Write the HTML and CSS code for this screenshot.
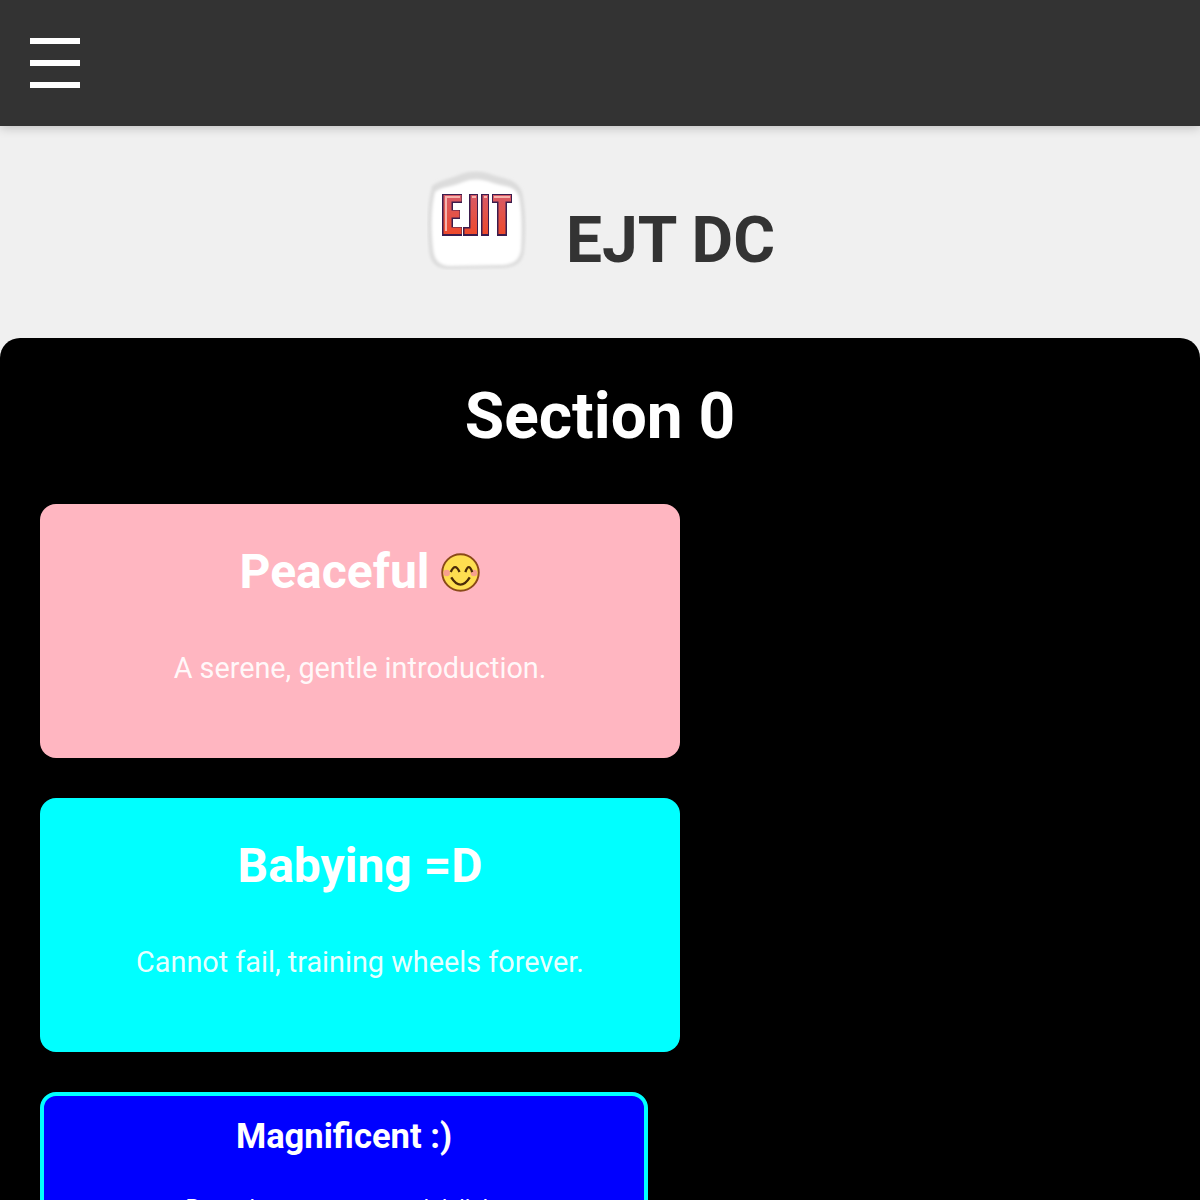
FILE: index.html
```html
<!DOCTYPE html>
<html lang="en">
<head>
<meta charset="utf-8">
<title>EJT DC</title>
<link rel="stylesheet" href="styles.css">
</head>
<body>
<header class="topbar">
  <button class="burger" aria-label="Menu"><span></span><span></span><span></span></button>
</header>
<div class="brand">
  <svg class="logo" viewBox="0 0 100 100" aria-label="EJIT">
    <defs>
      <filter id="soft" x="-10%" y="-10%" width="120%" height="120%"><feGaussianBlur stdDeviation="1.6"/></filter>
      <filter id="crisp" x="-5%" y="-5%" width="110%" height="110%"><feGaussianBlur stdDeviation="0.4"/></filter>
      <linearGradient id="red" x1="0" y1="0" x2="0" y2="1">
        <stop offset="0" stop-color="#d85a66"/>
        <stop offset="1" stop-color="#ee4a2c"/>
      </linearGradient>
    </defs>
    <path d="M5 16 C14 9 24 9 34 4 C46 0 56 1 66 5 C78 9 90 9 95 22 C99 40 99 62 97 82 C95 95 86 98 72 98 L22 99 C10 99 3 93 2 80 C0 58 0 36 5 16 Z" fill="#dcdcdc" filter="url(#soft)"/>
    <path d="M8 22 C16 16 26 17 36 12 C46 8 56 9 66 13 C78 17 88 15 92 27 C95 42 95 62 94 80 C92 92 84 95 72 95 L24 96 C12 96 7 90 6 78 C4 58 4 38 8 22 Z" fill="#fff" filter="url(#soft)"/>
    <g filter="url(#crisp)">
      <g fill="#3a1f4e">
        <path d="M15 24 H35 V33 H26 V40 H33 V49 H26 V57 H35 V66 H15 Z"/>
        <path d="M42 24 H51 V66 H36 V57 H42 Z"/>
        <path d="M54 24 H62 V66 H54 Z"/>
        <path d="M65 24 H85 V33 H80 V66 H70 V33 H65 Z"/>
      </g>
      <g fill="url(#red)">
        <path d="M16.5 25 H34.5 V31.5 H24.5 V40.5 H32.5 V47.5 H24.5 V57.5 H34.5 V64 H16.5 Z"/>
        <path d="M43.5 25 H50 V64 H37.5 V58.5 H43.5 Z"/>
        <path d="M55.5 25 H61 V64 H55.5 Z"/>
        <path d="M66 25 H84 V31.5 H78.5 V64 H71.5 V31.5 H66 Z"/>
      </g>
      <g fill="#f6b3ac">
        <path d="M18 26 H33 V28 H20 V61 H18 Z"/>
        <path d="M45 26 H49 V28 H45 Z"/>
        <path d="M57 26 H60 V28 H57 Z"/>
        <path d="M67 26 H83 V28 H67 Z"/>
      </g>
    </g>
  </svg>
  <h1 class="brand-name">EJT DC</h1>
</div>
<main class="panel">
  <h2 class="section-title">Section 0</h2>
  <article class="card card-pink">
    <h3 class="card-title">Peaceful
      <svg class="smiley" viewBox="0 0 40 40" aria-label="smile">
        <circle cx="20" cy="20" r="18.7" fill="#fede50" stroke="#8a4a18" stroke-width="2"/>
        <circle cx="5.8" cy="20.5" r="3.4" fill="#f7a08e"/>
        <circle cx="33.8" cy="20.5" r="3.4" fill="#f7a08e"/>
        <path d="M10 19.5 Q14.5 9.5 19 19.5 M25 19.5 Q28.5 9.5 32 19.5 M10.5 25 Q20 40 29.5 25" fill="none" stroke="#4a2a08" stroke-width="2.4"/>
      </svg>
    </h3>
    <p class="card-text">A serene, gentle introduction.</p>
  </article>
  <article class="card card-cyan">
    <h3 class="card-title">Babying =D</h3>
    <p class="card-text">Cannot fail, training wheels forever.</p>
  </article>
  <article class="card-small">
    <h3 class="small-title">Magnificent :)</h3>
    <p class="small-text">Pure pleasure, unmarred delight</p>
  </article>
</main>
</body>
</html>
```
FILE: styles.css
```css
* { box-sizing: border-box; }
html, body { margin: 0; padding: 0; }
body { background: #f0f0f0; font-family: Roboto, sans-serif; color: #fff; height: 1200px; overflow: hidden; }
.topbar { position: relative; height: 126px; background: #333; padding: 38px 30px 0; box-shadow: 0 2px 10px rgba(0,0,0,.2); }
.burger { display: flex; flex-direction: column; gap: 16px; width: 50px; padding: 0; border: 0; background: none; }
.burger span { display: block; height: 6px; background: #fff; }
.brand { height: 212px; display: flex; justify-content: center; align-items: flex-start; gap: 39px; padding: 44px 0 0 2px; }
.logo { width: 100px; height: 100px; }
.brand-name { margin: 33px 0 0; font-size: 64px; line-height: 75px; font-weight: 700; color: #333; }
.panel { background: #000; border-radius: 20px 20px 0 0; padding: 40px; height: 862px; overflow: hidden; }
.section-title { margin: 0 0 48px; text-align: center; font-size: 64px; line-height: 78px; font-weight: 700; }
.card { width: 640px; height: 254px; border-radius: 16px; padding: 40px; margin-bottom: 40px; text-align: center; }
.card-pink { background: #ffb6c1; }
.card-cyan { background: #0ff; }
.card-title { margin: 0; display: flex; justify-content: center; align-items: center; gap: 12px; font-size: 48px; line-height: 56px; font-weight: 700; }
.smiley { width: 39px; height: 39px; }
.card-text { margin: 50px 0 0; font-size: 28.8px; line-height: 36px; color: rgba(255,255,255,.92); }
.card-small { width: 608px; height: 200px; border: 4px solid #0ff; border-radius: 16px; background: #00f; padding: 19px 0 0; text-align: center; }
.small-title { margin: 0; font-size: 34.56px; line-height: 42px; font-weight: 700; }
.small-text { margin: 32px 0 0; font-size: 22.5px; line-height: 36px; }
```
